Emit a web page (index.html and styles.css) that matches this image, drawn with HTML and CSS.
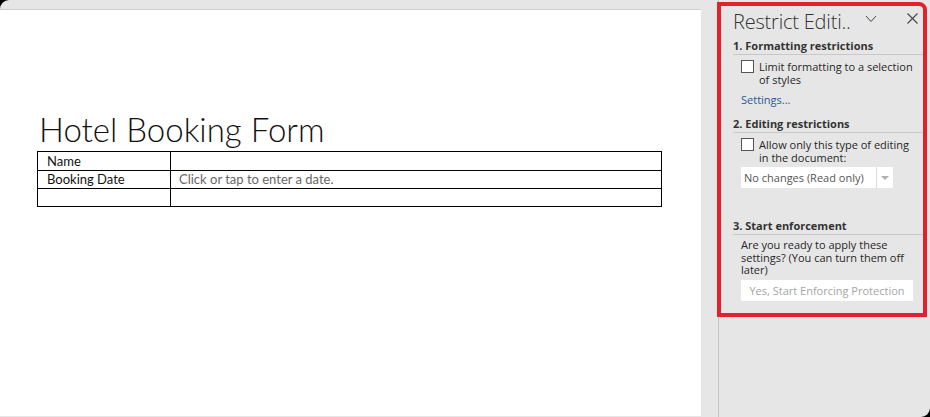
FILE: index.html
```html
<!DOCTYPE html>
<html lang="en">
<head>
    <meta charset="UTF-8">
    <meta name="viewport" content="width=device-width, initial-scale=1.0">
    <title>Hotel Booking Form - Restrict Editing</title>
    <link rel="stylesheet" href="styles.css">
</head>
<body>

<div class="window">
    <main class="canvas">
        <div class="page">
            <h1>Hotel Booking Form</h1>
            <table class="form-table">
                <tr>
                    <td class="label">Name</td>
                    <td></td>
                </tr>
                <tr>
                    <td class="label">Booking Date</td>
                    <td class="placeholder">Click or tap to enter a date.</td>
                </tr>
                <tr>
                    <td class="label"></td>
                    <td></td>
                </tr>
            </table>
        </div>
    </main>

    <aside class="pane">
        <div class="pane-box">
            <div class="pane-head">
                <span class="pane-title">Restrict Editi..</span>
                <svg class="pane-menu" width="12" height="8" viewBox="0 0 12 8">
                    <path d="M1 1 L6 6.5 L11 1" fill="none" stroke="#444" stroke-width="1"/>
                </svg>
                <svg class="pane-close" width="11" height="11" viewBox="0 0 11 11">
                    <path d="M0.5 0.5 L10.5 10.5 M10.5 0.5 L0.5 10.5" stroke="#444" stroke-width="1.1"/>
                </svg>
            </div>

            <h2>1. Formatting restrictions</h2>
            <div class="option">
                <span class="box"></span>
                <span>Limit formatting to a selection of styles</span>
            </div>
            <a href="#" class="settings">Settings...</a>

            <h2>2. Editing restrictions</h2>
            <div class="option">
                <span class="box"></span>
                <span>Allow only this type of editing in the document:</span>
            </div>
            <div class="select">
                <span class="select-value">No changes (Read only)</span>
                <span class="select-arrow">
                    <svg width="8" height="4" viewBox="0 0 8 4"><path d="M0 0 H8 L4 4 Z" fill="#b0b0b0"/></svg>
                </span>
            </div>

            <h2 class="enforce">3. Start enforcement</h2>
            <p class="note">Are you ready to apply these settings? (You can turn them off later)</p>
            <button class="enforce-btn">Yes, Start Enforcing Protection</button>
        </div>
    </aside>
</div>

</body>
</html>
```

FILE: styles.css
```css
html, body {
    margin: 0;
    padding: 0;
    background-color: #000;
}
.window {
    display: flex;
    width: 930px;
    height: 417px;
    background-color: #e6e6e6;
    border-top-left-radius: 9px;
    border-bottom-right-radius: 9px;
    overflow: hidden;
}

/* document area */
.canvas {
    width: 717px;
    flex-shrink: 0;
}
.page {
    width: 701px;
    height: 407px;
    margin-top: 9px;
    border-top: 1px solid #cfcfcf;
    background-color: #fff;
    padding: 0 0 0 37px;
    box-sizing: border-box;
    font-family: Lato, "Open Sans", sans-serif;
}
.page h1 {
    margin: 0;
    padding: 98px 0 0 2px;
    font-size: 33px;
    font-weight: 300;
    line-height: 43px;
    color: #111;
}
.form-table {
    width: 625px;
    border-collapse: collapse;
    font-size: 13px;
    color: #111;
}
.form-table td {
    height: 17px;
    padding: 0 0 0 8px;
    border: 1px solid #000;
    line-height: 17px;
}
.form-table tr:first-child td {
    height: 18px;
}
.form-table .label {
    width: 123px;
    padding-left: 9px;
}
.form-table .placeholder {
    color: #666;
}

/* restrict editing pane */
.pane {
    flex: 1;
    border-left: 1px solid #c3c3c3;
    margin-left: 1px;
    font-family: "Open Sans", "Noto Sans", sans-serif;
    font-size: 11px;
    color: #262626;
}
.pane-box {
    margin: 2px 3px 0 -2px;
    height: 315px;
    box-sizing: border-box;
    border: 4px solid #e3202b;
    border-top-right-radius: 8px;
    padding: 0 0 0 12px;
}
.pane-head {
    display: flex;
    align-items: center;
    height: 30px;
}
.pane-title {
    font-size: 20px;
    font-weight: 300;
    color: #333;
    letter-spacing: -0.2px;
}
.pane-menu {
    margin-left: 14px;
    margin-top: -4px;
}
.pane-close {
    margin-left: 30px;
    margin-top: -6px;
}
.pane h2 {
    margin: 0;
    font-size: 11px;
    font-weight: 700;
    line-height: 17px;
    padding-top: 1px;
    border-bottom: 1px solid #c8c8c8;
    color: #333;
}
.option {
    display: flex;
    gap: 5px;
    padding: 5px 6px 0 8px;
    line-height: 13px;
}
.box {
    width: 11px;
    height: 11px;
    flex-shrink: 0;
    border: 1px solid #555;
    background-color: #fff;
}
.settings {
    display: block;
    margin: 7px 0 8px 8px;
    line-height: 13px;
    color: #2b579a;
    text-decoration: none;
}
.select {
    display: flex;
    width: 152px;
    height: 21px;
    margin: 3px 0 0 8px;
    background-color: #fff;
    line-height: 21px;
}
.select-value {
    flex: 1;
    padding-left: 3px;
    color: #555;
}
.select-arrow {
    width: 16px;
    border-left: 1px solid #ddd;
    display: flex;
    align-items: center;
    justify-content: center;
}
.pane h2.enforce {
    margin-top: 28px;
}
.note {
    margin: 4px 8px 0 8px;
    line-height: 12.7px;
}
.enforce-btn {
    display: block;
    width: 172px;
    height: 21px;
    margin: 3px 0 0 8px;
    padding: 0;
    border: none;
    background-color: #fff;
    font-family: "Open Sans", "Noto Sans", sans-serif;
    font-size: 11px;
    color: #a6a6a6;
}
```
